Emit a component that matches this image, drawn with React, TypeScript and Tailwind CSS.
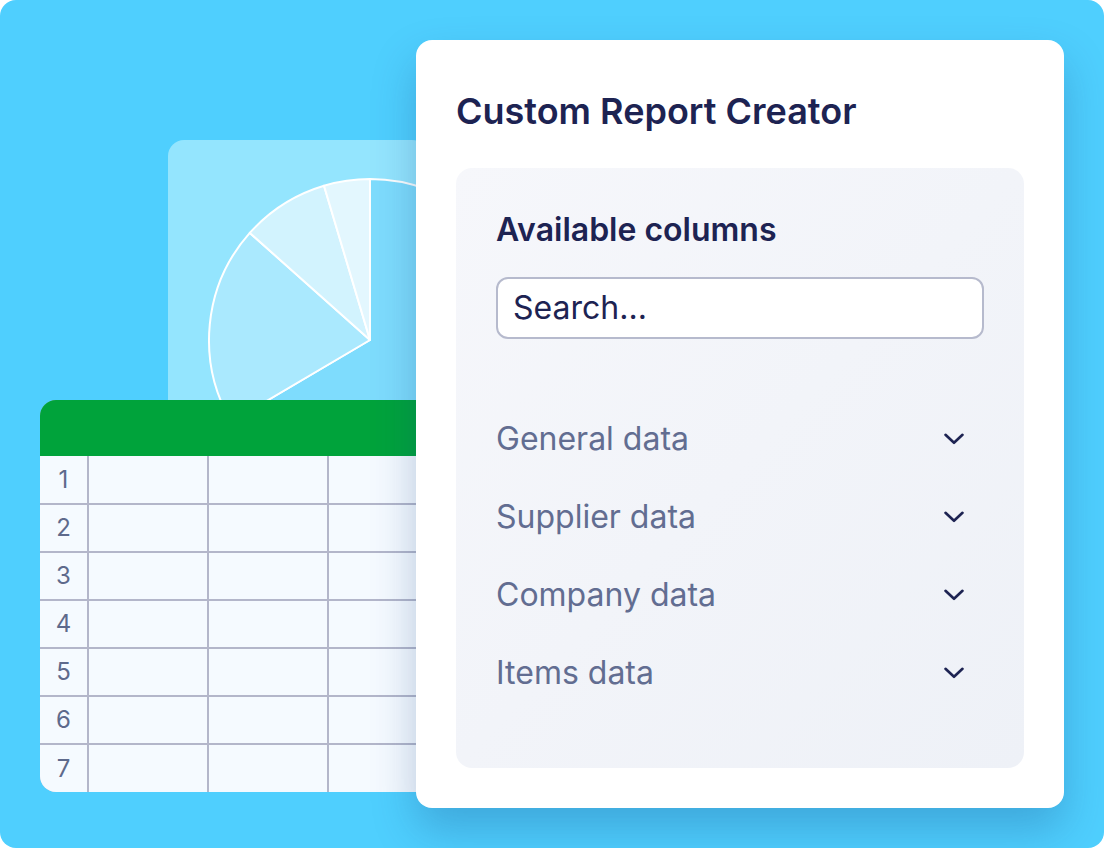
import React from "react";

const Chevron = () => (
  <svg width="20" height="12" viewBox="0 0 20 12" fill="none">
    <polyline points="1.5,1.8 10,9.8 18.5,1.8" stroke="#1d2352" strokeWidth="2.6" strokeLinecap="round" strokeLinejoin="round" />
  </svg>
);

const PieCard = () => (
  <div className="absolute left-[168px] top-[140px] w-[260px] h-[280px] rounded-2xl bg-[#94e5fe] overflow-hidden">
    <svg width="260" height="280" viewBox="0 0 260 280">
      <path d="M202,200 L63.3,281.7 A161,161 0 1 0 202,39 Z" fill="#7edcfd" stroke="#ffffff" strokeWidth="2" strokeLinejoin="round" />
      <path d="M202,200 L81.8,92.9 A161,161 0 0 0 63.3,281.7 Z" fill="#aae9fe" stroke="#ffffff" strokeWidth="2" strokeLinejoin="round" />
      <path d="M202,200 L156,45.7 A161,161 0 0 0 81.8,92.9 Z" fill="#d2f3fe" stroke="#ffffff" strokeWidth="2" strokeLinejoin="round" />
      <path d="M202,200 L202,39 A161,161 0 0 0 156,45.7 Z" fill="#e3f7fe" stroke="#ffffff" strokeWidth="2" strokeLinejoin="round" />
    </svg>
  </div>
);

const Sheet = () => {
  const rows = [1, 2, 3, 4, 5, 6, 7];
  return (
    <div className="absolute left-[40px] top-[400px] w-[420px] rounded-2xl overflow-hidden bg-[#b3b6ca]">
      <div className="h-[56px] bg-[#00a33b]" />
      <div className="grid grid-cols-[47px_118px_118px_118px_118px] grid-rows-[47px_46px_46px_46px_46px_46px_47px] gap-[2px]">
        {rows.map((n) => (
          <React.Fragment key={n}>
            <div className="bg-[#f5faff] flex items-center justify-center text-[24px] text-[#5e6a8c]">
              {n}
            </div>
            <div className="bg-[#f5faff]" />
            <div className="bg-[#f5faff]" />
            <div className="bg-[#f5faff]" />
            <div className="bg-[#f5faff]" />
          </React.Fragment>
        ))}
      </div>
    </div>
  );
};

export default function App() {
  const items = ["General data", "Supplier data", "Company data", "Items data"];
  return (
    <div className="w-[1104px] h-[848px] bg-white">
      <div className="relative w-[1104px] h-[848px] rounded-2xl overflow-hidden bg-[#4fcffe] font-['Inter',sans-serif]">
        <PieCard />
        <Sheet />
        <div className="relative z-10 flex justify-end pt-10 pr-10">
          <div className="w-[648px] h-[768px] rounded-2xl bg-white shadow-[0_22px_44px_rgba(20,70,130,0.28)] px-10 pt-[49px] pb-10 flex flex-col">
            <h1 className="text-[36px] leading-[44px] font-semibold text-[#1d2352] whitespace-nowrap">
              Custom Report Creator
            </h1>
            <div className="mt-[35px] flex-1 rounded-2xl bg-gradient-to-br from-[#f6f7fb] to-[#eef1f7] px-10 pt-[42px]">
              <h2 className="text-[32px] leading-[40px] font-semibold text-[#1d2352] whitespace-nowrap">Available columns</h2>
              <div className="mt-[27px] h-[62px] rounded-xl border-2 border-[#b6bacd] bg-white flex items-center px-[15px]">
                <span className="text-[32px] leading-[40px] text-[#1d2352]">Search...</span>
              </div>
              <div className="mt-[61px] flex flex-col">
                {items.map((t) => (
                  <div key={t} className="h-[78px] flex items-center justify-between pr-[20px]">
                    <span className="text-[32px] leading-[40px] text-[#626d91]">{t}</span>
                    <Chevron />
                  </div>
                ))}
              </div>
            </div>
          </div>
        </div>
      </div>
    </div>
  );
}
